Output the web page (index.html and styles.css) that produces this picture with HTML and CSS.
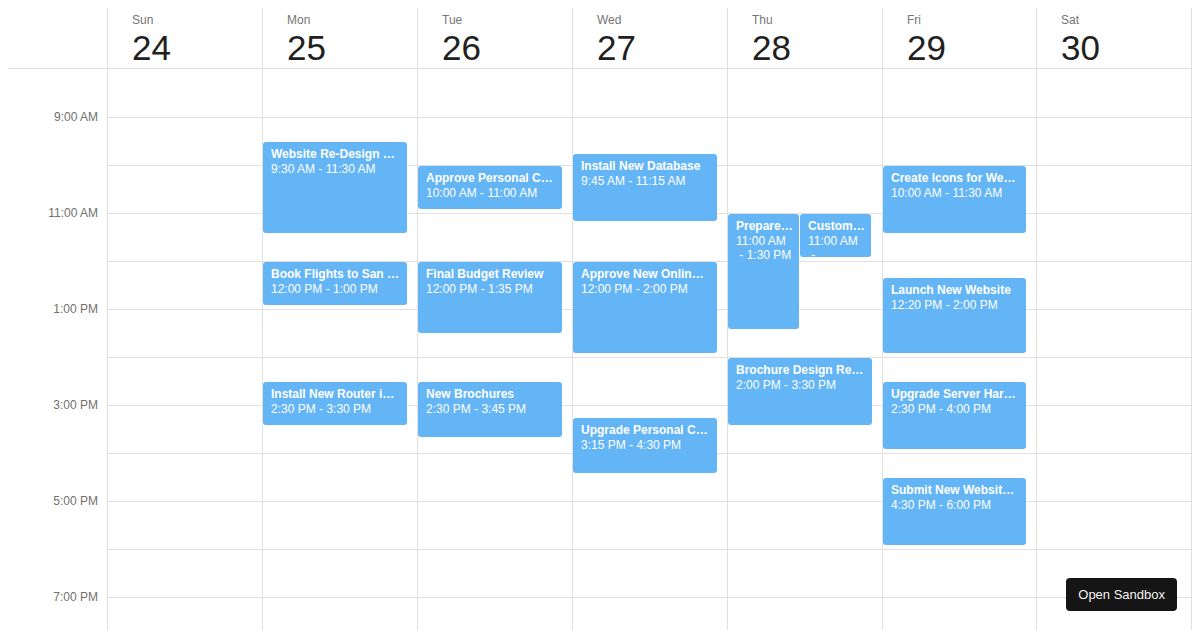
FILE: index.html
```html
<!DOCTYPE html>
<html lang="en">
<head>
<meta charset="utf-8">
<title>Week Scheduler</title>
<link rel="stylesheet" href="styles.css">
</head>
<body>
<div class="cal">
  <div class="head-gutter"></div>
  <div class="day-head"><div class="dname">Sun</div><div class="dnum">24</div></div>
  <div class="day-head"><div class="dname">Mon</div><div class="dnum">25</div></div>
  <div class="day-head"><div class="dname">Tue</div><div class="dnum">26</div></div>
  <div class="day-head"><div class="dname">Wed</div><div class="dnum">27</div></div>
  <div class="day-head"><div class="dname">Thu</div><div class="dnum">28</div></div>
  <div class="day-head"><div class="dname">Fri</div><div class="dnum">29</div></div>
  <div class="day-head"><div class="dname">Sat</div><div class="dnum">30</div></div>

  <div class="gutter">
    <div class="tlabel">9:00 AM</div>
    <div class="tlabel">11:00 AM</div>
    <div class="tlabel">1:00 PM</div>
    <div class="tlabel">3:00 PM</div>
    <div class="tlabel">5:00 PM</div>
    <div class="tlabel">7:00 PM</div>
  </div>

  <div class="day-col"></div>

  <div class="day-col">
    <div class="ev" style="top:73px;height:91px"><div class="ev-title">Website Re-Design Plan</div><div class="ev-time"><span class="nw">9:30 AM</span><wbr>&nbsp;- <span class="nw">11:30 AM</span></div></div>
    <div class="ev" style="top:193px;height:43px"><div class="ev-title">Book Flights to San Fran for Sales Trip</div><div class="ev-time"><span class="nw">12:00 PM</span><wbr>&nbsp;- <span class="nw">1:00 PM</span></div></div>
    <div class="ev" style="top:313px;height:43px"><div class="ev-title">Install New Router in Dev Room</div><div class="ev-time"><span class="nw">2:30 PM</span><wbr>&nbsp;- <span class="nw">3:30 PM</span></div></div>
  </div>

  <div class="day-col">
    <div class="ev" style="top:97px;height:43px"><div class="ev-title">Approve Personal Computer Upgrade Plan</div><div class="ev-time"><span class="nw">10:00 AM</span><wbr>&nbsp;- <span class="nw">11:00 AM</span></div></div>
    <div class="ev" style="top:193px;height:71px"><div class="ev-title">Final Budget Review</div><div class="ev-time"><span class="nw">12:00 PM</span><wbr>&nbsp;- <span class="nw">1:35 PM</span></div></div>
    <div class="ev" style="top:313px;height:55px"><div class="ev-title">New Brochures</div><div class="ev-time"><span class="nw">2:30 PM</span><wbr>&nbsp;- <span class="nw">3:45 PM</span></div></div>
  </div>

  <div class="day-col">
    <div class="ev" style="top:85px;height:67px"><div class="ev-title">Install New Database</div><div class="ev-time"><span class="nw">9:45 AM</span><wbr>&nbsp;- <span class="nw">11:15 AM</span></div></div>
    <div class="ev" style="top:193px;height:91px"><div class="ev-title">Approve New Online Marketing Strategy</div><div class="ev-time"><span class="nw">12:00 PM</span><wbr>&nbsp;- <span class="nw">2:00 PM</span></div></div>
    <div class="ev" style="top:349px;height:55px"><div class="ev-title">Upgrade Personal Computers</div><div class="ev-time"><span class="nw">3:15 PM</span><wbr>&nbsp;- <span class="nw">4:30 PM</span></div></div>
  </div>

  <div class="day-col">
    <div class="ev ev-half" style="top:145px;height:115px"><div class="ev-title">Prepare 2021 Marketing Plan</div><div class="ev-time"><span class="nw">11:00 AM</span><wbr>&nbsp;- <span class="nw">1:30 PM</span></div></div>
    <div class="ev ev-half ev-right" style="top:145px;height:43px"><div class="ev-title">Customer Workshop</div><div class="ev-time"><span class="nw">11:00 AM</span><wbr>&nbsp;- <span class="nw">12:00 PM</span></div></div>
    <div class="ev" style="top:289px;height:67px"><div class="ev-title">Brochure Design Review</div><div class="ev-time"><span class="nw">2:00 PM</span><wbr>&nbsp;- <span class="nw">3:30 PM</span></div></div>
  </div>

  <div class="day-col">
    <div class="ev" style="top:97px;height:67px"><div class="ev-title">Create Icons for Website</div><div class="ev-time"><span class="nw">10:00 AM</span><wbr>&nbsp;- <span class="nw">11:30 AM</span></div></div>
    <div class="ev" style="top:209px;height:75px"><div class="ev-title">Launch New Website</div><div class="ev-time"><span class="nw">12:20 PM</span><wbr>&nbsp;- <span class="nw">2:00 PM</span></div></div>
    <div class="ev" style="top:313px;height:67px"><div class="ev-title">Upgrade Server Hardware</div><div class="ev-time"><span class="nw">2:30 PM</span><wbr>&nbsp;- <span class="nw">4:00 PM</span></div></div>
    <div class="ev" style="top:409px;height:67px"><div class="ev-title">Submit New Website Design</div><div class="ev-time"><span class="nw">4:30 PM</span><wbr>&nbsp;- <span class="nw">6:00 PM</span></div></div>
  </div>

  <div class="day-col"></div>
</div>

<button class="sandbox-btn" type="button">Open Sandbox</button>
</body>
</html>
```

FILE: styles.css
```css
html, body {
  overflow: hidden;
}

body {
  margin: 8px;
  background: #fff;
  font-family: "Liberation Sans", Arial, sans-serif;
  color: #212121;
}

.cal {
  display: grid;
  grid-template-columns: 100px 155px 155px 155px 155px 155px 154px 155px;
  grid-template-rows: 61px 577px;
  width: 1184px;
  background: #fff;
  box-shadow: 0 1px 3px rgba(0, 0, 0, 0.2), 0 0 1px rgba(0, 0, 0, 0.18);
}

.head-gutter,
.day-head {
  border-right: 1px solid #e0e0e0;
  border-bottom: 1px solid #e0e0e0;
}

.day-head {
  padding: 4px 0 0 24px;
}

.dname {
  font-size: 12px;
  line-height: 16px;
  color: #757575;
}

.dnum {
  margin-top: 2px;
  font-size: 35px;
  line-height: 35px;
  color: #212121;
}

.gutter {
  border-right: 1px solid #e0e0e0;
  padding-top: 24px;
}

.tlabel {
  height: 96px;
  line-height: 48px;
  padding-right: 9px;
  text-align: right;
  font-size: 12px;
  color: #707070;
}

.day-col {
  position: relative;
  border-right: 1px solid #e0e0e0;
  padding-top: 1px;
  background-image: linear-gradient(to bottom, transparent 47px, #e0e0e0 47px);
  background-size: 100% 48px;
  background-origin: content-box;
  background-clip: content-box;
}

.ev {
  position: absolute;
  left: 0;
  width: calc(100% - 10px);
  box-sizing: border-box;
  padding: 5px 8px 0;
  background: #64b5f6;
  border-radius: 3px;
  color: #fff;
  font-size: 12px;
  line-height: 14px;
  overflow: hidden;
}

.ev-half {
  width: calc((100% - 10px) / 2 - 1px);
  padding-right: 5px;
}

.ev-half .ev-time {
  margin-right: 1.5px;
}

.ev-right {
  left: calc((100% - 10px) / 2);
}

.ev-title {
  font-weight: bold;
  white-space: nowrap;
  overflow: hidden;
  text-overflow: ellipsis;
  line-height: 15px;
}

.nw {
  white-space: nowrap;
}

.sandbox-btn {
  position: fixed;
  right: 23px;
  bottom: 19px;
  height: 33px;
  padding: 0 12px;
  border: 0;
  border-radius: 4px;
  background: #151515;
  color: #f2f2f2;
  font-family: "Liberation Sans", Arial, sans-serif;
  font-size: 13px;
}
```
